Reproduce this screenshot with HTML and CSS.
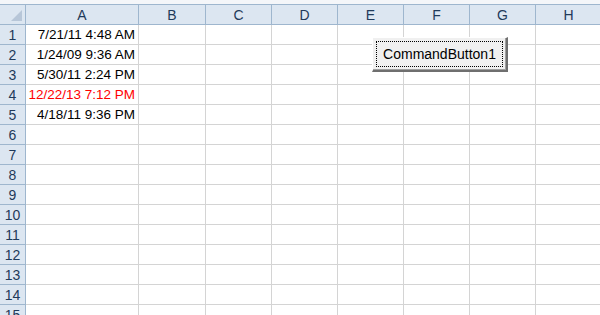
FILE: index.html
```
<!DOCTYPE html>
<html lang="en">
<head>
    <meta charset="UTF-8">
    <title>Sheet1</title>
    <link rel="stylesheet" href="styles.css">
</head>
<body>

<div class="sheet">
    <div class="top-strip"></div>
    <table class="grid">
        <colgroup>
            <col class="col-row">
            <col class="col-a">
            <col class="col-b">
            <col class="col-n">
            <col class="col-n">
            <col class="col-n">
            <col class="col-n">
            <col class="col-n">
            <col class="col-n">
        </colgroup>
        <thead>
            <tr>
                <th class="corner"><span class="corner-mark"></span></th>
                <th>A</th><th>B</th><th>C</th><th>D</th><th>E</th><th>F</th><th>G</th><th>H</th>
            </tr>
        </thead>
        <tbody id="rows"></tbody>
    </table>

    <!-- ActiveX button floating over the cells -->
    <button class="cmd-button"><span class="focus-box">CommandButton1</span></button>
</div>

<script>
    const values = ['7/21/11 4:48 AM', '1/24/09 9:36 AM', '5/30/11 2:24 PM', '12/22/13 7:12 PM', '4/18/11 9:36 PM'];
    const tbody = document.getElementById('rows');

    for (let i = 1; i <= 15; i++) {
        const tr = document.createElement('tr');
        let html = `<th class="row-head">${i}</th>`;
        const val = values[i - 1] || '';
        html += `<td class="num${i === 4 ? ' red' : ''}">${val}</td>`;
        for (let c = 0; c < 7; c++) html += '<td></td>';
        tr.innerHTML = html;
        tbody.appendChild(tr);
    }
</script>

</body>
</html>
```

FILE: styles.css
```
/* Sheet */
body {
    margin: 0;
    padding: 0;
    background-color: #ffffff;
    font-family: "Liberation Sans", Arial, sans-serif;
    overflow: hidden;
}
.sheet {
    position: relative;
    width: 600px;
    height: 315px;
    overflow: hidden;
}
.top-strip {
    height: 4px;
    background-color: #f4f6f9;
    border-bottom: 1px solid #9eb6ce;
}
.grid {
    table-layout: fixed;
    border-collapse: separate;
    border-spacing: 0;
    width: 601px;
}
.col-row { width: 26px; }
.col-a { width: 113px; }
.col-b { width: 67px; }
.col-n { width: 66px; }

.grid th,
.grid td {
    box-sizing: border-box;
    height: 20px;
    padding: 0;
    border-right: 1px solid #d4d4d4;
    border-bottom: 1px solid #d4d4d4;
    font-size: 14px;
    white-space: nowrap;
    overflow: hidden;
}

/* Headers */
.grid thead th {
    background-color: #dce6f1;
    border-right-color: #9eb6ce;
    border-bottom-color: #9eb6ce;
    color: #1f3a5a;
    font-weight: normal;
    text-align: center;
}
.grid .corner {
    position: relative;
}
.corner-mark {
    position: absolute;
    right: 3px;
    bottom: 3px;
    width: 0;
    height: 0;
    border-left: 11px solid transparent;
    border-bottom: 11px solid #b7c6d8;
}
.grid .row-head {
    background-color: #dce6f1;
    border-right-color: #9eb6ce;
    border-bottom-color: #9eb6ce;
    color: #1f3a5a;
    font-weight: normal;
    text-align: center;
}

/* Cells */
.grid .num {
    text-align: right;
    padding-right: 3px;
    font-size: 13.5px;
    color: #000;
}
.grid .red {
    color: #ff0000;
}

/* Command button */
.cmd-button {
    position: absolute;
    left: 372px;
    top: 37px;
    width: 136px;
    height: 35px;
    padding: 3px;
    box-sizing: border-box;
    background-color: #f0f0f0;
    border: none;
    border-top: 1px solid #ffffff;
    border-left: 1px solid #ffffff;
    border-right: 2px solid #6f6f6f;
    border-bottom: 2px solid #6f6f6f;
    box-shadow: inset -1px -1px 0 #a0a0a0;
    font-family: "Liberation Sans", Arial, sans-serif;
    font-size: 14px;
    color: #000;
    cursor: pointer;
}
.focus-box {
    display: flex;
    justify-content: center;
    align-items: center;
    height: 100%;
    border: 1px dotted #000;
    box-sizing: border-box;
}
```
